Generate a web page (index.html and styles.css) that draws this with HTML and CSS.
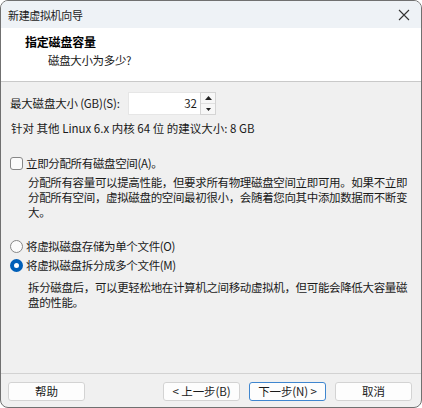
FILE: index.html
```html
<!DOCTYPE html>
<html lang="zh-CN">
<head>
<meta charset="utf-8">
<title>新建虚拟机向导</title>
<link rel="stylesheet" href="styles.css">
</head>
<body>
<div class="window">
  <div class="titlebar">
    <span class="title">新建虚拟机向导</span>
    <svg class="close" width="12" height="12" viewBox="0 0 12 12"><path d="M1 1 L11 11 M11 1 L1 11" stroke="#333" stroke-width="1.1" fill="none"/></svg>
  </div>
  <div class="header">
    <div class="h-title">指定磁盘容量</div>
    <div class="h-sub">磁盘大小为多少?</div>
  </div>
  <div class="body">
    <div class="size-row">
      <span class="label">最大磁盘大小 (GB)(S):</span>
      <div class="spin">
        <div class="spin-input">32</div>
        <div class="spin-btns">
          <div class="spin-btn"><svg width="7" height="4" viewBox="0 0 7 4"><path d="M0 4 L3.5 0 L7 4 Z" fill="#222"/></svg></div>
          <div class="spin-btn"><svg width="5" height="3" viewBox="0 0 5 3"><path d="M0 0 L2.5 3 L5 0 Z" fill="#222"/></svg></div>
        </div>
      </div>
    </div>
    <div class="hint">针对 其他 Linux 6.x 内核 64 位 的建议大小: 8 GB</div>
    <div class="opt check-row">
      <span class="checkbox"></span>
      <span class="opt-label">立即分配所有磁盘空间(A)。</span>
    </div>
    <p class="desc d1">分配所有容量可以提高性能，但要求所有物理磁盘空间立即可用。如果不立即分配所有空间，虚拟磁盘的空间最初很小，会随着您向其中添加数据而不断变大。</p>
    <div class="opt radio-row r1">
      <span class="radio"></span>
      <span class="opt-label">将虚拟磁盘存储为单个文件(O)</span>
    </div>
    <div class="opt radio-row r2">
      <span class="radio checked"></span>
      <span class="opt-label">将虚拟磁盘拆分成多个文件(M)</span>
    </div>
    <p class="desc d2">拆分磁盘后，可以更轻松地在计算机之间移动虚拟机，但可能会降低大容量磁盘的性能。</p>
  </div>
  <div class="footer">
    <button class="btn">帮助</button>
    <div class="spacer"></div>
    <button class="btn">&lt; 上一步(B)</button>
    <button class="btn primary">下一步(N) &gt;</button>
    <button class="btn">取消</button>
  </div>
</div>
</body>
</html>
```

FILE: styles.css
```css
* { box-sizing: border-box; }
html, body { margin: 0; padding: 0; }
body {
  width: 422px;
  height: 408px;
  background: #ffffff;
  font-family: "Noto Sans CJK SC", "Liberation Sans", sans-serif;
  font-size: 11.5px;
  letter-spacing: -0.35px;
  color: #1a1a1a;
  overflow: hidden;
}
.window {
  width: 422px;
  height: 408px;
  border: 1px solid #707070;
  border-radius: 8px;
  overflow: hidden;
  display: flex;
  flex-direction: column;
  background: #f0f0f0;
}
.titlebar {
  height: 27px;
  flex: none;
  background: #eef2f6;
  display: flex;
  align-items: center;
  padding: 0 11px 0 7px;
}
.title {
  flex: 1;
  font-size: 11px;
  line-height: 14px;
  color: #1a1a1a;
}
.close { display: block; }
.header {
  flex: none;
  height: 54px;
  background: #ffffff;
  border-bottom: 1px solid #c9c9c9;
  padding-top: 6px;
}
.h-title {
  font-size: 12px;
  font-weight: bold;
  line-height: 16px;
  padding-left: 24px;
  color: #000;
  letter-spacing: -0.2px;
}
.h-sub {
  margin-top: 2px;
  font-size: 11.5px;
  line-height: 16px;
  padding-left: 47px;
}
.body {
  flex: 1;
  padding: 10px 9px 0 9px;
}
.size-row {
  display: flex;
  align-items: center;
  height: 23px;
}
.label {
  width: 118px;
  line-height: 15px;
  letter-spacing: -0.2px;
}
.spin {
  display: flex;
  height: 23px;
}
.spin-input {
  width: 72px;
  height: 23px;
  background: #ffffff;
  border: 1px solid #e6e6e6;
  border-right: none;
  text-align: right;
  padding-right: 3px;
  line-height: 21px;
  font-size: 11.5px;
  letter-spacing: 0;
}
.spin-btns {
  width: 16px;
  height: 23px;
  display: flex;
  flex-direction: column;
  border: 1px solid #d4d4d4;
  background: #f7f7f7;
}
.spin-btn {
  flex: 1;
  display: flex;
  align-items: center;
  justify-content: center;
}
.spin-btn + .spin-btn { border-top: 1px solid #e0e0e0; }
.spin-btn svg { display: block; }
.hint {
  margin-top: 6px;
  line-height: 15px;
  padding-left: 1px;
  letter-spacing: 0;
}
.opt {
  display: flex;
  align-items: center;
  height: 15px;
}
.check-row { margin-top: 20px; }
.opt-label { margin-left: 3px; line-height: 15px; }
.checkbox {
  width: 13px;
  height: 13px;
  border: 1px solid #878787;
  border-radius: 3px;
  background: #fbfbfb;
  flex: none;
}
.radio {
  width: 13px;
  height: 13px;
  border: 1px solid #878787;
  border-radius: 50%;
  background: #fbfbfb;
  flex: none;
}
.radio.checked {
  border: 4px solid #005fb8;
  background: #ffffff;
}
.desc {
  margin: 4px 0 0 18px;
  line-height: 15px;
  width: 386px;
}
.r1 { margin-top: 19px; }
.r2 { margin-top: 4px; }
.d2 { margin-top: 7px; line-height: 14.5px; }
.footer {
  flex: none;
  height: 34px;
  border-top: 1px solid #d2d2d2;
  display: flex;
  align-items: flex-start;
  padding: 8px 9px 0 7px;
  gap: 9px;
}
.spacer { flex: 1; }
.btn {
  width: 77px;
  height: 19px;
  margin: 0;
  padding: 0;
  font-family: inherit;
  font-size: 11.5px;
  letter-spacing: -0.1px;
  line-height: 17px;
  color: #1a1a1a;
  background: #fdfdfd;
  border: 1px solid #d3d3d3;
  border-radius: 3px;
}
.btn.primary { border-color: #3f86cf; }
```
